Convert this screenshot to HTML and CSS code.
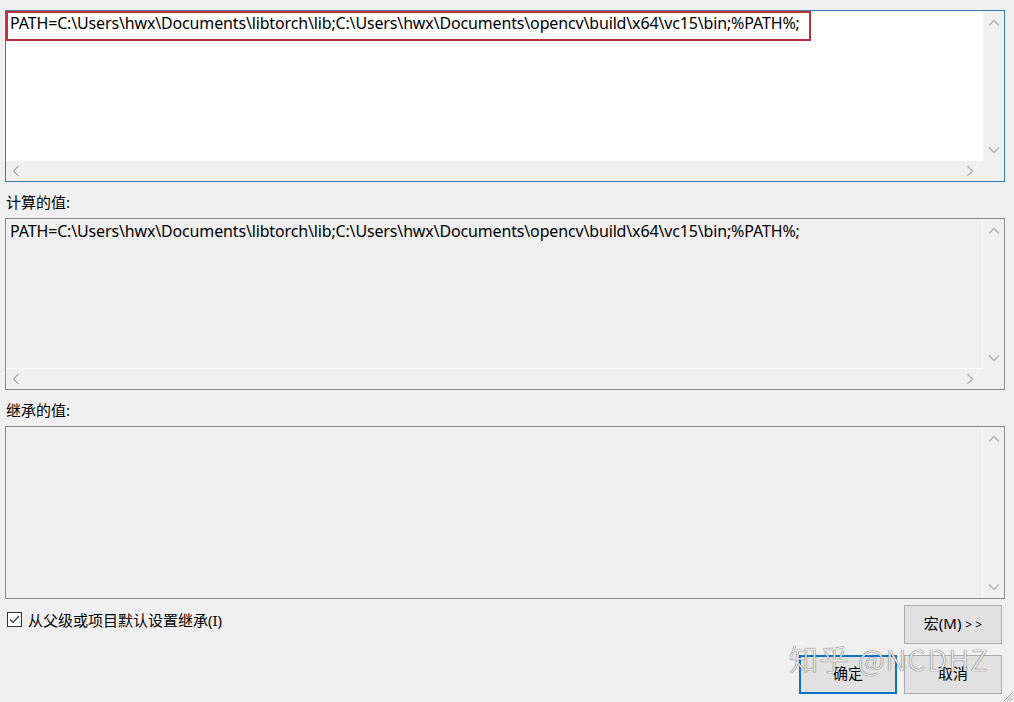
FILE: index.html
```html
<!doctype html>
<html lang="zh-CN">
  <head>
    <meta charset="UTF-8" />
    <title>环境</title>
    <link rel="stylesheet" href="styles.css">
  </head>
  <body>
    <div class="dialog">
      <div class="box box-edit">
        <div class="box-content">
          <div class="mark">PATH=C:\Users\hwx\Documents\libtorch\lib;C:\Users\hwx\Documents\opencv\build\x64\vc15\bin;%PATH%;</div>
        </div>
        <div class="vscroll">
          <svg class="arrow" width="12" height="8" viewBox="0 0 12 8"><path d="M1 6.5 L6 1.5 L11 6.5" /></svg>
          <svg class="arrow" width="12" height="8" viewBox="0 0 12 8"><path d="M1 1.5 L6 6.5 L11 1.5" /></svg>
        </div>
        <div class="hscroll">
          <svg class="arrow" width="8" height="12" viewBox="0 0 8 12"><path d="M6.5 1 L1.5 6 L6.5 11" /></svg>
          <svg class="arrow" width="8" height="12" viewBox="0 0 8 12"><path d="M1.5 1 L6.5 6 L1.5 11" /></svg>
        </div>
        <div class="corner"></div>
      </div>

      <div class="label">计算的值:</div>
      <div class="box box-read">
        <div class="box-content">
          <div class="line">PATH=C:\Users\hwx\Documents\libtorch\lib;C:\Users\hwx\Documents\opencv\build\x64\vc15\bin;%PATH%;</div>
        </div>
        <div class="vscroll">
          <svg class="arrow" width="12" height="8" viewBox="0 0 12 8"><path d="M1 6.5 L6 1.5 L11 6.5" /></svg>
          <svg class="arrow" width="12" height="8" viewBox="0 0 12 8"><path d="M1 1.5 L6 6.5 L11 1.5" /></svg>
        </div>
        <div class="hscroll">
          <svg class="arrow" width="8" height="12" viewBox="0 0 8 12"><path d="M6.5 1 L1.5 6 L6.5 11" /></svg>
          <svg class="arrow" width="8" height="12" viewBox="0 0 8 12"><path d="M1.5 1 L6.5 6 L1.5 11" /></svg>
        </div>
        <div class="corner"></div>
      </div>

      <div class="label">继承的值:</div>
      <div class="box box-inherit">
        <div class="box-content"></div>
        <div class="vscroll">
          <svg class="arrow" width="12" height="8" viewBox="0 0 12 8"><path d="M1 6.5 L6 1.5 L11 6.5" /></svg>
          <svg class="arrow" width="12" height="8" viewBox="0 0 12 8"><path d="M1 1.5 L6 6.5 L11 1.5" /></svg>
        </div>
      </div>

      <div class="footer">
        <label class="check">
          <svg class="check-box" width="15" height="15" viewBox="0 0 15 15">
            <rect x="0.5" y="0.5" width="14" height="14" fill="#fff" stroke="#333" />
            <path d="M3 7.5 L6 10.5 L12 4" fill="none" stroke="#333" stroke-width="1.2" />
          </svg>
          <span>从父级或项目默认设置继承(I)</span>
        </label>
        <div class="buttons">
          <button class="btn">宏(M) <span class="chev">&gt; &gt;</span></button>
          <div class="btn-row">
            <button class="btn btn-default">确定</button>
            <button class="btn">取消</button>
          </div>
        </div>
      </div>

      <div class="watermark">知乎 @NCDHZ</div>
      <svg class="grip" width="12" height="12" viewBox="0 0 12 12">
        <path d="M11 2 L2 11 M11 5 L5 11 M11 8 L8 11" stroke="#a0a0a0" stroke-width="1" />
      </svg>
    </div>
  </body>
</html>
```

FILE: styles.css
```css
* {
  margin: 0;
  padding: 0;
  box-sizing: border-box;
}

body {
  background-color: #f0f0f0;
  color: #000;
  font-family: "Noto Sans", "Noto Sans CJK SC", sans-serif;
  font-size: 15px;
}

.dialog {
  position: relative;
  width: 1014px;
  height: 702px;
  padding: 10px 9px 0 5px;
  overflow: hidden;
}

.box {
  display: grid;
  grid-template-columns: 1fr 21px;
  grid-template-rows: 1fr 20px;
  border: 1px solid #8a8a8a;
  height: 172px;
}

.box-edit {
  border-color: #3d7ca6;
}

.box-edit .box-content {
  background-color: #fff;
}

.box-read .box-content {
  border-right: 1px solid #fff;
  border-bottom: 1px solid #fff;
  padding: 2px 0 0 4px;
}

.box-inherit {
  grid-template-rows: 1fr;
  height: 173px;
}

.box-inherit .box-content {
  border-right: 1px solid #fff;
}

.box-content {
  overflow: hidden;
  white-space: nowrap;
  font-size: 16px;
  letter-spacing: -0.15px;
}

.mark {
  display: inline-block;
  border: 2px solid #c0303c;
  padding: 0 9px 6px 2px;
  line-height: 20px;
}

.line {
  line-height: 20px;
}

.vscroll {
  display: flex;
  flex-direction: column;
  justify-content: space-between;
  align-items: center;
  padding: 8px 0 7px;
}

.hscroll {
  display: flex;
  justify-content: space-between;
  align-items: center;
  padding: 0 9px 0 6px;
}

.arrow path {
  fill: none;
  stroke: #b4b4b4;
  stroke-width: 1.5;
}

.label {
  height: 36px;
  padding: 10px 0 0 1px;
  line-height: 20px;
}

.footer {
  display: flex;
  justify-content: space-between;
  padding-top: 6px;
}

.check {
  display: flex;
  align-items: center;
  gap: 6px;
  height: 28px;
  padding: 0 0 0 2px;
}

.buttons {
  display: flex;
  flex-direction: column;
  align-items: flex-end;
  gap: 11px;
  padding-right: 3px;
}

.btn-row {
  display: flex;
  gap: 7px;
}

.btn {
  width: 98px;
  height: 39px;
  padding-bottom: 5px;
  border: 1px solid #adadad;
  background-color: #e1e1e1;
  font-family: "Noto Sans", "Noto Sans CJK SC", sans-serif;
  font-size: 15px;
  color: #000;
}

.chev {
  font-size: 12px;
}

.btn-default {
  border: 2px solid #0b74c8;
}

.watermark {
  position: absolute;
  left: 789px;
  top: 637px;
  font-family: "Noto Sans CJK SC", sans-serif;
  font-size: 29px;
  font-weight: 300;
  letter-spacing: 1.5px;
  color: rgba(255, 255, 255, 0.85);
  text-shadow: 0 0 1px #6d6d6d, 0 0 1px #6d6d6d;
}

.grip {
  position: absolute;
  right: 0;
  bottom: 0;
}
```
